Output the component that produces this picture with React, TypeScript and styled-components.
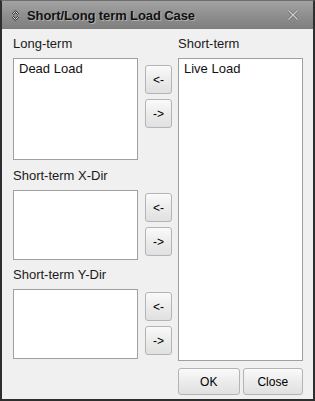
import React from 'react';
import styled, { createGlobalStyle } from 'styled-components';

const GlobalStyle = createGlobalStyle`
  html, body {
    margin: 0;
    padding: 0;
    background: #f0f0f0;
  }
  * {
    box-sizing: border-box;
  }
`;

const Window = styled.div`
  width: 315px;
  height: 401px;
  display: flex;
  flex-direction: column;
  background: #f0f0f0;
  border: 2px solid #2e2e2e;
  border-top: 1px solid #6e6e6e;
  font-family: 'Liberation Sans', Arial, sans-serif;
  font-size: 13px;
  color: #111;
  overflow: hidden;
`;

const TitleBar = styled.div`
  height: 28px;
  flex: 0 0 28px;
  display: flex;
  align-items: center;
  padding: 0 14px 0 9px;
  gap: 7px;
  background: linear-gradient(to bottom, #a3a3a3 0%, #8f8f8f 50%, #7e7e7e 100%);
`;

const Title = styled.span`
  flex: 1;
  font-weight: bold;
  font-size: 13px;
  color: #111;
  text-shadow: 1px 1px 0 rgba(255, 255, 255, 0.35);
  letter-spacing: -0.1px;
`;

const Body = styled.div`
  flex: 1;
  display: flex;
  gap: 6px;
  padding: 8px 0 0 11px;
`;

const LeftColumn = styled.div`
  width: 159px;
  display: flex;
  flex-direction: column;
`;

const Section = styled.div<{ $top: number }>`
  display: flex;
  flex-direction: column;
  margin-top: ${p => p.$top}px;
`;

const Label = styled.div`
  height: 14px;
  line-height: 14px;
  margin-bottom: 7px;
  white-space: nowrap;
  color: #1a1a1a;
`;

const Row = styled.div`
  display: flex;
  gap: 7px;
`;

const ListBox = styled.div<{ $height: number }>`
  width: 125px;
  height: ${p => p.$height}px;
  background: #fff;
  border: 1px solid #a0a0a0;
  padding: 2px 5px;
  line-height: 16px;
`;

const ArrowColumn = styled.div<{ $offset: number }>`
  display: flex;
  flex-direction: column;
  gap: 5px;
  padding-top: ${p => p.$offset}px;
`;

const Button = styled.button<{ $width: number; $height: number }>`
  width: ${p => p.$width}px;
  height: ${p => p.$height}px;
  padding: 0;
  border: 1px solid #b4b4b4;
  border-radius: 3px;
  background: linear-gradient(to bottom, #fafafa 0%, #ececec 50%, #e0e0e0 100%);
  font-family: 'Liberation Sans', Arial, sans-serif;
  font-size: 12px;
  color: #000;
  line-height: 1;
`;

const RightColumn = styled.div`
  width: 125px;
  display: flex;
  flex-direction: column;
`;

const Footer = styled.div`
  display: flex;
  gap: 3px;
  margin-top: 7px;
`;

const SortIcon = () => (
  <svg width="9" height="11" viewBox="0 0 9 11">
    <path d="M1.5 4.5 L4.5 1.5 L7.5 4.5" fill="none" stroke="#3a3a3a" strokeWidth="2" />
    <path d="M1.5 6.5 L4.5 9.5 L7.5 6.5" fill="none" stroke="#3a3a3a" strokeWidth="2" />
    <path d="M1.5 4.5 L4.5 1.5 L7.5 4.5" fill="none" stroke="#d8d8d8" strokeWidth="1" />
    <path d="M1.5 6.5 L4.5 9.5 L7.5 6.5" fill="none" stroke="#d8d8d8" strokeWidth="1" />
  </svg>
);

const CloseIcon = () => (
  <svg width="12" height="12" viewBox="0 0 12 12">
    <path d="M1.5 1.5 L10.5 10.5 M10.5 1.5 L1.5 10.5" stroke="#6a6a6a" strokeWidth="2.6" />
    <path d="M1.5 1.5 L10.5 10.5 M10.5 1.5 L1.5 10.5" stroke="#cfcfcf" strokeWidth="1.3" />
  </svg>
);

const Arrows = ({ offset }: { offset: number }) => (
  <ArrowColumn $offset={offset}>
    <Button $width={27} $height={29}>&lt;-</Button>
    <Button $width={27} $height={29}>-&gt;</Button>
  </ArrowColumn>
);

export default function App() {
  return (
    <>
      <GlobalStyle />
      <Window>
        <TitleBar>
          <SortIcon />
          <Title>Short/Long term Load Case</Title>
          <CloseIcon />
        </TitleBar>
        <Body>
          <LeftColumn>
            <Section $top={0}>
              <Label>Long-term</Label>
              <Row>
                <ListBox $height={102}>Dead Load</ListBox>
                <Arrows offset={7} />
              </Row>
            </Section>
            <Section $top={9}>
              <Label>Short-term X-Dir</Label>
              <Row>
                <ListBox $height={70} />
                <Arrows offset={3} />
              </Row>
            </Section>
            <Section $top={8}>
              <Label>Short-term Y-Dir</Label>
              <Row>
                <ListBox $height={70} />
                <Arrows offset={3} />
              </Row>
            </Section>
          </LeftColumn>
          <RightColumn>
            <Label>Short-term</Label>
            <ListBox $height={303}>Live Load</ListBox>
            <Footer>
              <Button $width={62} $height={27}>OK</Button>
              <Button $width={61} $height={27}>Close</Button>
            </Footer>
          </RightColumn>
        </Body>
      </Window>
    </>
  );
}
